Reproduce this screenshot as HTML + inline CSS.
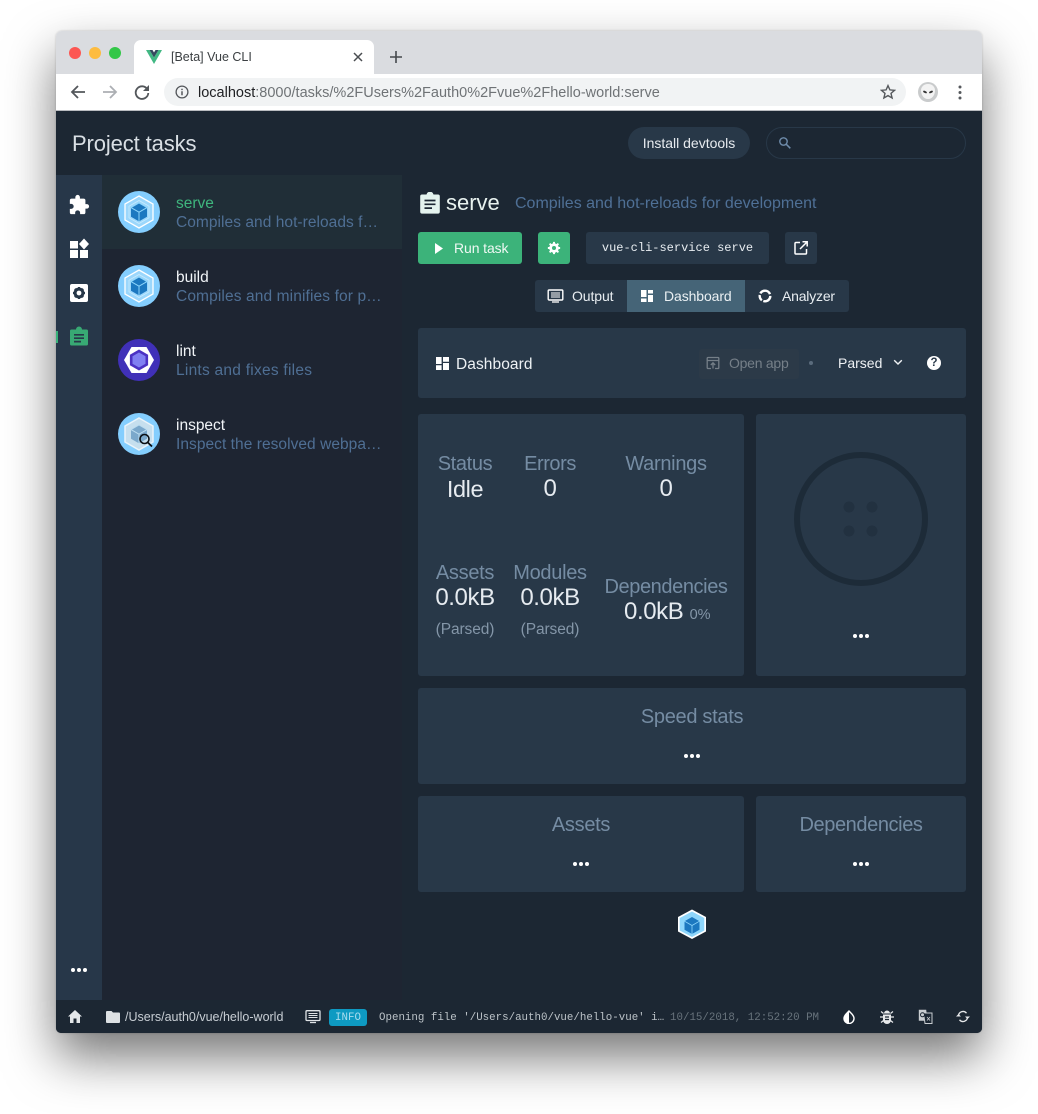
<!DOCTYPE html>
<html><head><meta charset="utf-8"><title>Vue CLI</title>
<style>
html,body{margin:0;padding:0;background:#fff;width:1038px;height:1114px;overflow:hidden}
*{box-sizing:border-box}
body{font-family:"Liberation Sans",sans-serif;position:relative}
.a{position:absolute;white-space:nowrap}
.c{text-align:center}
#win{position:absolute;left:56px;top:31px;width:926px;height:1002px;border-radius:6px;box-shadow:0 24px 50px rgba(0,0,0,.54),0 0 2px rgba(0,0,0,.2)}
.card{position:absolute;background:#283848;border-radius:3px}
.mono{font-family:"Liberation Mono",monospace}
.lab{color:#758ca3;font-size:20px;letter-spacing:-.3px;font-weight:400}
.val{color:#e6ebf0;font-size:24px;letter-spacing:-.4px}
.par{color:#8496a8;font-size:15.500px;letter-spacing:-.1px}
.tn{color:#f1f4f7;font-size:15.500px}
.td{color:#4f6f94;font-size:15.500px;letter-spacing:.05px}
.dots{position:absolute;display:flex;gap:2px}
.dots i{width:4px;height:4px;border-radius:50%;background:#fff;display:block}
svg{position:absolute;display:block}
</style></head><body>
<div id="win"></div>
<div class="a" style="left:56px;top:31px;width:926px;height:43px;background:#dadce0;border-radius:6px 6px 0 0"></div>
<div class="a" style="left:69px;top:47px;width:12px;height:12px;border-radius:50%;background:#fc5753"></div>
<div class="a" style="left:89px;top:47px;width:12px;height:12px;border-radius:50%;background:#fdbc40"></div>
<div class="a" style="left:109px;top:47px;width:12px;height:12px;border-radius:50%;background:#33c748"></div>
<div class="a" style="left:134px;top:40px;width:240px;height:34px;background:#fff;border-radius:7px 7px 0 0"></div>
<svg style="left:146px;top:50px" width="16" height="14" viewBox="0 0 16 14"><path d="M0 0h3.500L8 7.500 12.500 0H16L8 14z" fill="#41b883"/><path d="M3.500 0h3L8 2.500 9.500 0h3L8 7.500z" fill="#35495e"/></svg>
<div class="a" style="left:171px;top:49px;font-size:12.500px;line-height:16px;color:#3c4043">[Beta] Vue CLI</div>
<svg style="left:352px;top:51px" width="12" height="12" viewBox="0 0 12 12"><path d="M2 2l8 8M10 2l-8 8" stroke="#4a4d51" stroke-width="1.500"/></svg>
<svg style="left:389px;top:50px" width="14" height="14" viewBox="0 0 14 14"><path d="M7 1v12M1 7h12" stroke="#45484c" stroke-width="1.600"/></svg>

<div class="a" style="left:56px;top:74px;width:926px;height:37px;background:#fff;border-bottom:1px solid #b9bcc0"></div>
<svg style="left:70px;top:84px" width="16" height="16" viewBox="0 0 16 16"><path d="M15 8H2M8 2L2 8l6 6" fill="none" stroke="#53575b" stroke-width="1.800"/></svg>
<svg style="left:102px;top:84px" width="16" height="16" viewBox="0 0 16 16"><path d="M1 8h13M8 2l6 6-6 6" fill="none" stroke="#acafb3" stroke-width="1.800"/></svg>
<svg style="left:134px;top:84px" width="16" height="16" viewBox="0 0 16 16"><path d="M13.500 5.500A6.300 6.300 0 1 0 14.300 9" fill="none" stroke="#53575b" stroke-width="1.800"/><path d="M15 1v6H9z" fill="#53575b"/></svg>
<div class="a" style="left:164px;top:78px;width:742px;height:28px;border-radius:14px;background:#f1f3f4"></div>
<svg style="left:175px;top:85px" width="14" height="14" viewBox="0 0 14 14"><circle cx="7" cy="7" r="5.900" fill="none" stroke="#55585c" stroke-width="1.300"/><path d="M7 6.200v4M7 3.700v1.400" stroke="#55585c" stroke-width="1.500"/></svg>
<div class="a" style="left:198px;top:84px;font-size:14.500px;line-height:18px;color:#6f7376"><span style="color:#202124">localhost</span>:8000/tasks/%2FUsers%2Fauth0%2Fvue%2Fhello-world:serve</div>
<svg style="left:880px;top:84px" width="16" height="16" viewBox="0 0 16 16"><path d="M8 1.600l1.900 4.300 4.700.4-3.600 3.100 1.100 4.600-4.100-2.400-4.100 2.400 1.100-4.600-3.600-3.100 4.700-.4z" fill="none" stroke="#55585c" stroke-width="1.400"/></svg>
<div class="a" style="left:918px;top:82px;width:20px;height:20px;border-radius:50%;background:#c9cbcc"></div>
<div class="a" style="left:921px;top:84px;width:14px;height:15px;border-radius:50% 50% 50% 50%/45% 45% 60% 60%;background:#f3f3f3"></div>
<div class="a" style="left:923px;top:91px;width:4px;height:2px;background:#333;border-radius:50%;transform:rotate(25deg)"></div>
<div class="a" style="left:929px;top:91px;width:4px;height:2px;background:#333;border-radius:50%;transform:rotate(-25deg)"></div>
<svg style="left:957px;top:85px" width="6" height="15" viewBox="0 0 6 15"><circle cx="3" cy="2" r="1.500" fill="#55585c"/><circle cx="3" cy="7.500" r="1.500" fill="#55585c"/><circle cx="3" cy="13" r="1.500" fill="#55585c"/></svg>

<!-- app -->
<div class="a" style="left:56px;top:111px;width:926px;height:922px;background:#1c2733;border-radius:0 0 5px 5px"></div>
<div class="a" style="left:72px;top:130px;font-size:22px;line-height:28px;color:#d9dfe4;letter-spacing:-.12px">Project tasks</div>
<div class="a c" style="left:628px;top:127px;width:122px;height:32px;border-radius:16px;background:#283848;color:#e7ebef;font-size:14px;line-height:32px">Install devtools</div>
<div class="a" style="left:766px;top:127px;width:200px;height:32px;border-radius:16px;border:1px solid #283848"></div>
<svg style="left:778px;top:136px" width="14" height="14" viewBox="0 0 14 14"><circle cx="5.500" cy="5.500" r="3.700" fill="none" stroke="#6f8cab" stroke-width="1.400"/><path d="M8.300 8.300l4 4" stroke="#6f8cab" stroke-width="1.500"/></svg>

<!-- side nav -->
<div class="a" style="left:56px;top:175px;width:46px;height:825px;background:#273749"></div>
<div class="a" style="left:56px;top:331px;width:2px;height:12px;background:#38b27a"></div>
<svg style="left:68px;top:194px" width="22" height="22" viewBox="0 0 24 24"><path fill="#fff" d="M20.500 11H19V7a2 2 0 0 0-2-2h-4V3.500a2.500 2.500 0 0 0-5 0V5H4a2 2 0 0 0-2 2v3.800h1.500a2.700 2.700 0 0 1 0 5.400H2V20a2 2 0 0 0 2 2h3.800v-1.500a2.700 2.700 0 0 1 5.400 0V22H17a2 2 0 0 0 2-2v-4h1.500a2.500 2.500 0 0 0 0-5z"/></svg>
<svg style="left:67px;top:236px" width="24" height="24" viewBox="0 0 24 24"><path fill="#fff" d="M3 5h8v7.500H3zM3 14h8v8H3zM13 14h8v8h-8zM17 2.500l5 5.500-5 5.500-5-5.500z"/></svg>
<svg style="left:67px;top:281px" width="24" height="24" viewBox="0 0 24 24"><rect x="3" y="3" width="18" height="18" rx="2" fill="#fff"/><circle cx="12" cy="12" r="4" fill="none" stroke="#273749" stroke-width="3"/><path d="M12 6v12M6 12h12M7.800 7.800l8.400 8.400M16.200 7.800l-8.400 8.400" stroke="#273749" stroke-width="2"/><circle cx="12" cy="12" r="2.400" fill="#fff"/></svg>
<svg style="left:67px;top:325px" width="24" height="24" viewBox="0 0 24 24"><path fill="#38a974" d="M4.500 4.500h4.500a3 3 0 0 1 6 0h4.500a1.500 1.500 0 0 1 1.500 1.500v13a1.500 1.500 0 0 1-1.500 1.500h-15A1.500 1.500 0 0 1 3 19V6a1.500 1.500 0 0 1 1.500-1.500z"/><path stroke="#273749" stroke-width="1.700" d="M7 9.800h10M7 13.200h10M7 16.600h7"/></svg>
<div class="dots" style="left:71px;top:968px"><i></i><i></i><i></i></div>

<!-- list -->
<div class="a" style="left:102px;top:175px;width:300px;height:825px;background:#1e2532"></div>
<div class="a" style="left:102px;top:175px;width:300px;height:74px;background:#202e37"></div>

<svg style="left:118px;top:191px" width="42" height="42" viewBox="0 0 42 42"><circle cx="21" cy="21" r="21" fill="#84cefe"/><path d="M21 5L35 13v16L21 37 7 29V13z" fill="#9bd7fc" stroke="#fff" stroke-width="1.300"/><path d="M21 9.500L31 15.200v11.600L21 32.500 11 26.800V15.200z" fill="none" stroke="#c9ebfd" stroke-width=".8"/><path d="M21 12l8 4.600v9.200L21 30.400 13 25.800v-9.200z" fill="#1c78c0"/><path d="M21 12l8 4.600-8 4.600-8-4.600zM21 21.200v9.200" fill="none" stroke="#8ed6fb" stroke-width="1"/></svg>
<svg style="left:118px;top:265px" width="42" height="42" viewBox="0 0 42 42"><circle cx="21" cy="21" r="21" fill="#84cefe"/><path d="M21 5L35 13v16L21 37 7 29V13z" fill="#9bd7fc" stroke="#fff" stroke-width="1.300"/><path d="M21 9.500L31 15.200v11.600L21 32.500 11 26.800V15.200z" fill="none" stroke="#c9ebfd" stroke-width=".8"/><path d="M21 12l8 4.600v9.200L21 30.400 13 25.800v-9.200z" fill="#1c78c0"/><path d="M21 12l8 4.600-8 4.600-8-4.600zM21 21.200v9.200" fill="none" stroke="#8ed6fb" stroke-width="1"/></svg>
<svg style="left:118px;top:339px" width="42" height="42" viewBox="0 0 42 42"><circle cx="21" cy="21" r="21" fill="#4030b8"/><path d="M6 21l7.500-13h15L36 21l-7.500 13h-15z" fill="#fff"/><path d="M21 10.500L30.100 15.700v10.600L21 31.500 11.900 26.300V15.700z" fill="#4b32c3"/><path d="M21 13.500l6.500 3.750v7.500L21 28.500l-6.500-3.750v-7.500z" fill="#8080f2"/></svg>
<svg style="left:118px;top:413px" width="42" height="42" viewBox="0 0 42 42"><circle cx="21" cy="21" r="21" fill="#84cefe"/><path d="M21 5L35 13v16L21 37 7 29V13z" fill="#c6dfee" stroke="#eaf4fa" stroke-width="1.500"/><path d="M21 12l8 4.600v9.200L21 30.400 13 25.800v-9.200z" fill="#7ba8cb"/><path d="M21 12l8 4.600-8 4.600-8-4.600zM21 21.200v9.200" fill="none" stroke="#bbdcf0" stroke-width="1"/><circle cx="26.500" cy="26" r="4.500" fill="none" stroke="#0b0f13" stroke-width="1.600"/><path d="M29.800 29.500L34 33.500" stroke="#0b0f13" stroke-width="1.800"/></svg>

<div class="a tn" style="left:176px;top:195px;line-height:18px;color:#3fb67e">serve</div>
<div class="a td" style="left:176px;top:213px;line-height:20px">Compiles and hot-reloads f…</div>
<div class="a tn" style="left:176px;top:269px;line-height:18px">build</div>
<div class="a td" style="left:176px;top:287px;line-height:20px;letter-spacing:.12px">Compiles and minifies for p…</div>
<div class="a tn" style="left:176px;top:343px;line-height:18px">lint</div>
<div class="a td" style="left:176px;top:361px;line-height:20px;letter-spacing:.25px">Lints and fixes files</div>
<div class="a tn" style="left:176px;top:417px;line-height:18px">inspect</div>
<div class="a td" style="left:176px;top:435px;line-height:20px">Inspect the resolved webpa…</div>

<!-- content header -->
<svg style="left:420px;top:192px" width="20" height="22" viewBox="0 0 20 22"><path fill="#e4f3ee" d="M2 2.500h4.500a3.600 3.600 0 0 1 7 0H18a1.800 1.800 0 0 1 1.800 1.800v15.500A1.800 1.800 0 0 1 18 21.600H2a1.800 1.800 0 0 1-1.800-1.800V4.300A1.800 1.800 0 0 1 2 2.500z"/><path stroke="#1c2733" stroke-width="1.700" d="M4.500 8.500h11M4.500 12.300h11M4.500 16.100h7.500"/></svg>
<div class="a" style="left:446px;top:189px;font-size:22px;line-height:28px;color:#e8f2ef">serve</div>
<div class="a" style="left:515px;top:194px;font-size:16px;line-height:20px;color:#4f7096">Compiles and hot-reloads for development</div>

<div class="a" style="left:418px;top:232px;width:104px;height:32px;background:#3cb37a;border-radius:3px"></div>
<svg style="left:434px;top:243px" width="10" height="11" viewBox="0 0 10 11"><path d="M1 0l8 5.500L1 11z" fill="#fff"/></svg>
<div class="a" style="left:454px;top:240px;font-size:14px;line-height:17px;color:#eef8f3;letter-spacing:-.1px">Run task</div>
<div class="a" style="left:538px;top:232px;width:32px;height:32px;background:#3cb37a;border-radius:3px"></div>
<svg style="left:547px;top:241px" width="14" height="14" viewBox="0 0 16 16"><circle cx="8" cy="8" r="4" fill="none" stroke="#fff" stroke-width="3"/><path d="M8 1v14M1 8h14M3 3l10 10M13 3L3 13" stroke="#fff" stroke-width="2.200"/><circle cx="8" cy="8" r="2.300" fill="#3cb37a"/></svg>
<div class="a mono c" style="left:586px;top:232px;width:183px;height:32px;background:#283848;border-radius:3px;color:#e8edf1;font-size:12px;line-height:33px">vue-cli-service serve</div>
<div class="a" style="left:785px;top:232px;width:32px;height:32px;background:#283848;border-radius:3px"></div>
<svg style="left:793px;top:240px" width="16" height="16" viewBox="0 0 16 16"><path d="M7 2.500H3a1 1 0 0 0-1 1V13a1 1 0 0 0 1 1h9.500a1 1 0 0 0 1-1V9M9.500 1.800h4.700v4.700M14 2L7 9" fill="none" stroke="#fff" stroke-width="1.500"/></svg>

<div class="a" style="left:535px;top:280px;width:314px;height:32px;background:#283848;border-radius:3px"></div>
<div class="a" style="left:627px;top:280px;width:118px;height:32px;background:#456477"></div>
<svg style="left:547px;top:289px" width="17" height="14" viewBox="0 0 17 14"><rect x="1.200" y="1" width="14.600" height="10" rx="1" fill="none" stroke="#fff" stroke-width="1.400"/><path d="M4 4h9M4 6h9M4 8h9" stroke="#fff" stroke-width="1"/><path d="M5 13h7" stroke="#fff" stroke-width="1.300"/></svg>
<div class="a" style="left:572px;top:288px;font-size:14px;line-height:17px;color:#e8edf1;letter-spacing:-.1px">Output</div>
<svg style="left:640px;top:289px" width="14" height="14" viewBox="0 0 14 14"><path fill="#fff" d="M1 1h5.500v7H1zM1 9.500h5.500V13H1zM8 1h5v3.500H8zM8 6h5v7H8z"/></svg>
<div class="a" style="left:664px;top:288px;font-size:14px;line-height:17px;color:#eaf0f3;letter-spacing:-.1px">Dashboard</div>
<svg style="left:758px;top:289px" width="14" height="14" viewBox="0 0 14 14"><circle cx="7" cy="7" r="5.300" fill="none" stroke="#fff" stroke-width="2.400" stroke-dasharray="10 1.600 6 1.600 12 1.800"/></svg>
<div class="a" style="left:782px;top:288px;font-size:14px;line-height:17px;color:#e8edf1;letter-spacing:-.2px">Analyzer</div>

<!-- dashboard bar -->
<div class="card" style="left:418px;top:328px;width:548px;height:70px"></div>
<svg style="left:436px;top:357px" width="13" height="13" viewBox="0 0 13 13"><path fill="#fff" d="M0 0h5.600v7H0zM0 8.300h5.600V13H0zM7 0h6v4.700H7zM7 6h6v7H7z"/></svg>
<div class="a" style="left:456px;top:356px;font-size:15.500px;line-height:18px;color:#edf1f4;letter-spacing:.08px">Dashboard</div>
<div class="a" style="left:699px;top:349px;width:100px;height:30px;background:#2c3a48;border-radius:3px"></div>
<svg style="left:706px;top:356px" width="14" height="14" viewBox="0 0 14 14"><path d="M1.500 4.500h11M5 12.500H2a.8.800 0 0 1-.8-.8V2.300A.8.800 0 0 1 2 1.500h10a.8.800 0 0 1 .8.800v9.400a.8.800 0 0 1-.8.800H9" fill="none" stroke="#757f88" stroke-width="1.300"/><path d="M7 12.500V7.500M4.800 9L7 6.800 9.200 9" fill="none" stroke="#757f88" stroke-width="1.300"/></svg>
<div class="a" style="left:729px;top:355px;font-size:14px;line-height:17px;color:#757f88;letter-spacing:-.25px">Open app</div>
<div class="a" style="left:809px;top:361px;width:4px;height:4px;border-radius:50%;background:#5a6b7c"></div>
<div class="a" style="left:838px;top:355px;font-size:14px;line-height:17px;color:#eef1f4">Parsed</div>
<svg style="left:893px;top:359px" width="10" height="7" viewBox="0 0 10 7"><path d="M1.200 1.200L5 5l3.800-3.800" fill="none" stroke="#f0f3f5" stroke-width="1.400"/></svg>
<div class="a" style="left:927px;top:356px;width:14px;height:14px;border-radius:50%;background:#fff"></div>
<div class="a c" style="left:927px;top:356px;width:14px;font-size:11.500px;line-height:14px;font-weight:700;color:#283848">?</div>

<!-- stats card -->
<div class="card" style="left:418px;top:414px;width:326px;height:262px"></div>
<div class="card" style="left:756px;top:414px;width:210px;height:262px"></div>

<div class="a c lab" style="left:415px;top:453px;width:100px;line-height:23px;letter-spacing:-.35px">Status</div>
<div class="a c val" style="left:415px;top:475px;width:100px;line-height:28px;font-size:23.500px">Idle</div>
<div class="a c lab" style="left:500px;top:453px;width:100px;line-height:23px;letter-spacing:-.45px">Errors</div>
<div class="a c val" style="left:500px;top:475px;width:100px;line-height:28px">0</div>
<div class="a c lab" style="left:606px;top:453px;width:120px;line-height:23px">Warnings</div>
<div class="a c val" style="left:606px;top:475px;width:120px;line-height:28px">0</div>

<div class="a c lab" style="left:415px;top:562px;width:100px;line-height:23px">Assets</div>
<div class="a c val" style="left:415px;top:584px;width:100px;line-height:28px">0.0kB</div>
<div class="a c par" style="left:415px;top:621px;width:100px;line-height:18px">(Parsed)</div>
<div class="a c lab" style="left:500px;top:562px;width:100px;line-height:23px">Modules</div>
<div class="a c val" style="left:500px;top:584px;width:100px;line-height:28px">0.0kB</div>
<div class="a c par" style="left:500px;top:621px;width:100px;line-height:18px">(Parsed)</div>
<div class="a c lab" style="left:596px;top:576px;width:140px;line-height:23px;letter-spacing:-.4px">Dependencies</div>
<div class="a val" style="left:624px;top:598px;line-height:28px">0.0kB <span class="par" style="font-size:14.500px">0%</span></div>

<svg style="left:793px;top:451px" width="136" height="136" viewBox="0 0 136 136"><circle cx="68" cy="68" r="64" fill="none" stroke="#1d2b38" stroke-width="6"/><g fill="#223140"><circle cx="56" cy="56" r="5.500"/><circle cx="79" cy="56" r="5.500"/><circle cx="56" cy="80" r="5.500"/><circle cx="79" cy="80" r="5.500"/></g></svg>
<div class="dots" style="left:853px;top:634px"><i></i><i></i><i></i></div>

<div class="card" style="left:418px;top:688px;width:548px;height:96px"></div>
<div class="a c lab" style="left:418px;top:706px;width:548px;line-height:23px">Speed stats</div>
<div class="dots" style="left:684px;top:754px"><i></i><i></i><i></i></div>

<div class="card" style="left:418px;top:796px;width:326px;height:96px"></div>
<div class="a c lab" style="left:418px;top:814px;width:326px;line-height:23px">Assets</div>
<div class="dots" style="left:573px;top:862px"><i></i><i></i><i></i></div>
<div class="card" style="left:756px;top:796px;width:210px;height:96px"></div>
<div class="a c lab" style="left:756px;top:814px;width:210px;line-height:23px;letter-spacing:-.4px">Dependencies</div>
<div class="dots" style="left:853px;top:862px"><i></i><i></i><i></i></div>

<svg style="left:676px;top:908px" width="32" height="32" viewBox="0 0 32 32"><path d="M16 1.500L30 9v14.500L16 31 2 23.500V9z" fill="#fff"/><path d="M16 3.500L28.300 10v12.500L16 29 3.700 22.500V10z" fill="#8ed6fb"/><path d="M16 9l7.500 4.200v8.600L16 26l-7.500-4.200v-8.600z" fill="#1c78c0"/><path d="M8.500 13.200L16 17.500l7.500-4.300M16 17.500V26" fill="none" stroke="#8ed6fb" stroke-width=".8"/></svg>

<!-- footer -->
<div class="a" style="left:56px;top:1000px;width:926px;height:33px;background:#1c2733;border-radius:0 0 5px 5px"></div>
<svg style="left:68px;top:1010px" width="14" height="13" viewBox="0 0 14 13"><path fill="#e4e7ea" d="M7 0l7 6.500h-2V13H8.500V8.500h-3V13H2V6.500H0z"/></svg>
<svg style="left:106px;top:1011px" width="14" height="12" viewBox="0 0 14 12"><path fill="#dde1e4" d="M1 0h4.500L7 1.500h6a1 1 0 0 1 1 1V11a1 1 0 0 1-1 1H1a1 1 0 0 1-1-1V1a1 1 0 0 1 1-1z"/></svg>
<div class="a" style="left:125px;top:1010px;font-size:12.500px;line-height:15px;color:#c8ced4">/Users/auth0/vue/hello-world</div>
<svg style="left:305px;top:1010px" width="16" height="14" viewBox="0 0 16 14"><rect x="1" y=".7" width="14" height="9.800" rx="1" fill="none" stroke="#dfe3e6" stroke-width="1.300"/><path d="M3.500 3.500h9M3.500 5.500h9M3.500 7.500h9" stroke="#dfe3e6" stroke-width="1"/><path d="M5 12.500h6" stroke="#dfe3e6" stroke-width="1.300"/></svg>
<div class="a mono c" style="left:329px;top:1009px;width:38px;height:17px;background:#0e9ac2;border-radius:3px;color:#a8dcee;font-size:10.800px;line-height:18px">INFO</div>
<div class="a mono" style="left:379px;top:1011px;font-size:10.800px;line-height:14px;color:#bcc3c8">Opening file '/Users/auth0/vue/hello-vue' i…</div>
<div class="a mono" style="left:670px;top:1011px;font-size:10.800px;line-height:14px;color:#68737c">10/15/2018, 12:52:20 PM</div>
<svg style="left:843px;top:1010px" width="12" height="14" viewBox="0 0 12 14"><path d="M6 1C3 4 1 6 1 8.500a5 5 0 0 0 10 0C11 6 9 4 6 1z" fill="none" stroke="#fff" stroke-width="1.400"/><path d="M6 1C3 4 1 6 1 8.500a5 5 0 0 0 5 5z" fill="#fff"/></svg>
<svg style="left:880px;top:1009px" width="14" height="15" viewBox="0 0 14 15"><path fill="#e8eaec" d="M4 4.500a3 3 0 0 1 6 0zM3 5.500h8V11a4 4 0 0 1-8 0z"/><path d="M1 2.500l2.500 2M13 2.500l-2.500 2M0 8h3M11 8h3M1 13.500l2.500-2M13 13.500l-2.500-2" stroke="#e8eaec" stroke-width="1.200"/><path d="M5 8h4M5 10.500h4" stroke="#1c2733" stroke-width="1.200"/></svg>
<svg style="left:918px;top:1009px" width="15" height="15" viewBox="0 0 15 15"><path d="M0.800 0.800h7.400l1.300 11H0.800z" fill="#c9cdd1"/><path d="M5.500 4h8.500v10.500H7z" fill="#1c2733" stroke="#c9cdd1" stroke-width="1"/><circle cx="4.500" cy="5.800" r="2" fill="none" stroke="#1c2733" stroke-width="1"/><path d="M9 8l3 3.500M12 8l-3 3.500" stroke="#c9cdd1" stroke-width=".8"/></svg>
<svg style="left:956px;top:1010px" width="14" height="13" viewBox="0 0 14 13"><path d="M2.500 6a4.500 4.500 0 0 1 8-2.800M11.500 7a4.500 4.500 0 0 1-8 2.800" fill="none" stroke="#e8eaec" stroke-width="1.300"/><path d="M0 6.500h5L2.500 4zM14 6.500H9l2.500 2.500z" fill="#e8eaec"/></svg>
</body></html>
